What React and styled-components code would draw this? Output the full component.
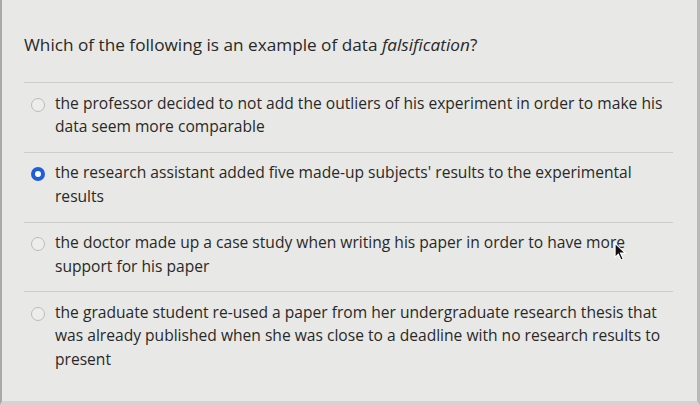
import React from 'react';
import styled, { createGlobalStyle } from 'styled-components';

const GlobalStyle = createGlobalStyle`
  html, body {
    margin: 0;
    padding: 0;
    background: #e7e7e5;
  }
`;

const Page = styled.div`
  position: relative;
  box-sizing: border-box;
  width: 700px;
  height: 405px;
  padding: 35px 24px 0 22px;
  background: #e8e8e6;
  border-left: 2px solid #a9a9a7;
  border-right: 3px solid #b9b9b7;
  border-bottom: 4px solid #d4d4d2;
  font-family: 'Open Sans', 'Liberation Sans', sans-serif;
  color: #282828;
  overflow: hidden;
`;

const Question = styled.div`
  font-size: 17.2px;
  line-height: 20px;
  margin-bottom: 27px;
`;

const Options = styled.div`
  display: flex;
  flex-direction: column;
`;

const Option = styled.label`
  display: flex;
  align-items: flex-start;
  gap: 10px;
  padding: 8.5px 0 13.5px 6px;
  border-top: 1px solid #cdcdcb;
  font-size: 15.6px;
  line-height: 23.4px;
`;

const Radio = styled.span`
  flex: none;
  box-sizing: border-box;
  width: 14px;
  height: 14px;
  margin: 6px 0 0 1px;
  border-radius: 50%;
  border: ${(p) => (p.$checked ? '4.5px solid #1d5fd8' : '1.6px solid #bcbcba')};
  background: ${(p) => (p.$checked ? '#ffffff' : '#ededeb')};
`;

const Text = styled.span`
  max-width: 614px;
`;

const Cursor = styled.svg`
  position: absolute;
  left: 612px;
  top: 242px;
`;

const options = [
  { text: 'the professor decided to not add the outliers of his experiment in order to make his data seem more comparable' },
  { text: "the research assistant added five made-up subjects' results to the experimental results", checked: true },
  { text: 'the doctor made up a case study when writing his paper in order to have more support for his paper' },
  { text: 'the graduate student re-used a paper from her undergraduate research thesis that was already published when she was close to a deadline with no research results to present' },
];

const App = () => {
  return (
    <>
      <GlobalStyle />
      <Page>
        <Question>
          Which of the following is an example of data <em>falsification</em>?
        </Question>
        <Options>
          {options.map((o, i) => (
            <Option key={i}>
              <Radio $checked={o.checked} />
              <Text>{o.text}</Text>
            </Option>
          ))}
        </Options>
        <Cursor width="13" height="20" viewBox="0 0 12 18">
          <path d="M1 1 L1 14 L4 11 L6.5 16.5 L8.5 15.5 L6 10 L10.5 10 Z" fill="#111" stroke="#fff" strokeWidth="1" />
        </Cursor>
      </Page>
    </>
  );
};

export default App;
